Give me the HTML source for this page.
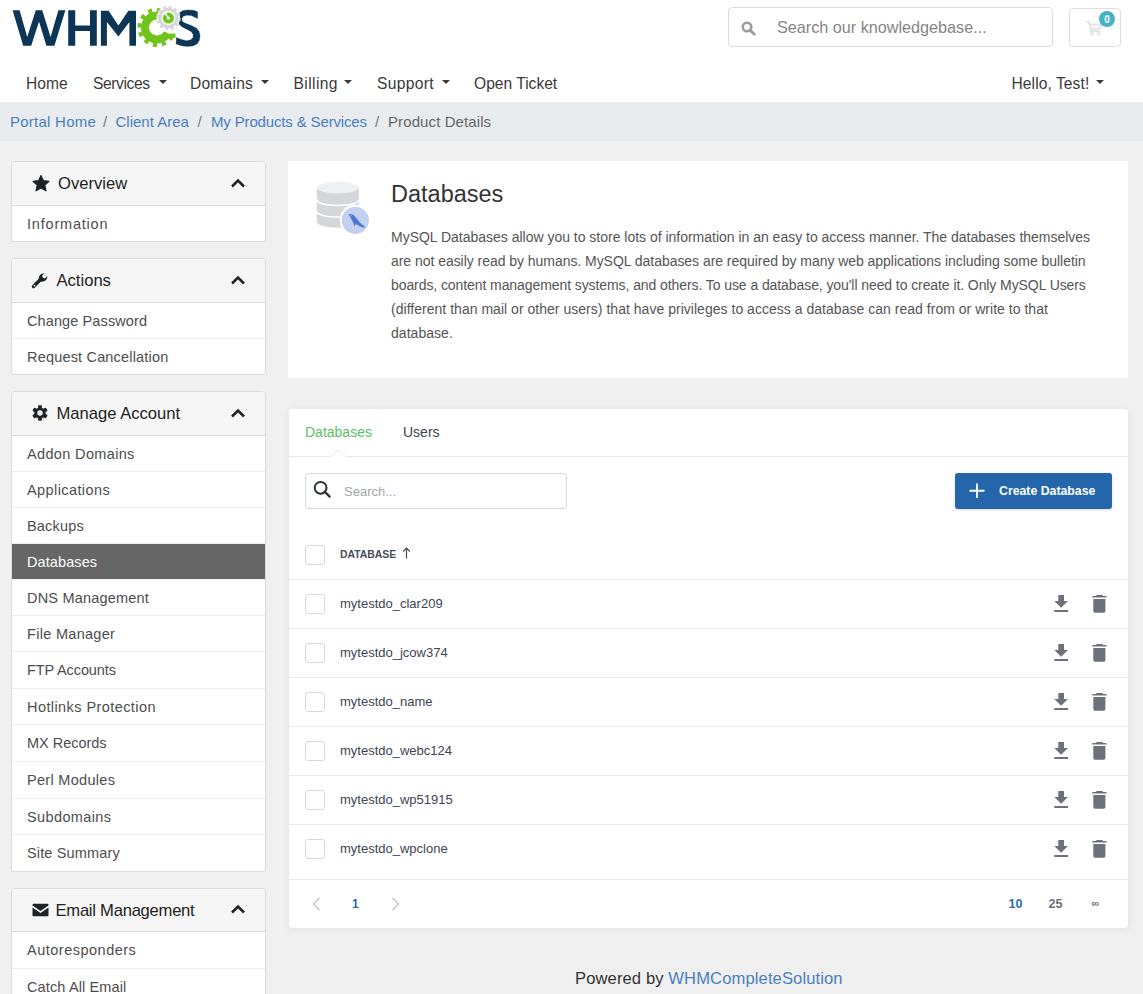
<!DOCTYPE html>
<html><head><meta charset="utf-8">
<style>
*{box-sizing:border-box;margin:0;padding:0}
html,body{width:1143px;height:994px;overflow:hidden}
body{background:#f0f0f0;font-family:"Liberation Sans",sans-serif;color:#333;position:relative}
.abs{position:absolute}
#hdr{position:absolute;left:0;top:0;width:1143px;height:102px;background:#fff}
#crumb{position:absolute;left:0;top:102px;width:1143px;height:39px;background:#e9ecef}
.nav{position:absolute;top:75px;font-size:15.6px;color:#3a3a3a;white-space:nowrap;line-height:18px}
.caret{position:absolute;top:80px;width:0;height:0;border-left:4.5px solid transparent;border-right:4.5px solid transparent;border-top:4.6px solid #3a3a3a}
.bc{position:absolute;top:112px;font-size:15px;line-height:18px;color:#4a7fbf;white-space:nowrap}
.bcs{position:absolute;top:112px;font-size:15px;line-height:18px;color:#777}
.panel{position:absolute;left:11px;width:255px;background:#fff;border:1px solid #dcdcdc;border-radius:4px 4px 2px 2px;overflow:hidden}
.ph{height:44px;background:#f6f6f6;border-bottom:1px solid #dcdcdc;position:relative}
.ph .t{position:absolute;left:46px;top:12px;font-size:16.6px;line-height:20px;color:#222;white-space:nowrap}
.ph .ic{position:absolute;left:20px;top:13px}
.ph .chev{position:absolute;left:218px;top:16px}
.it{height:36px;border-top:1px solid #efefef;position:relative;font-size:14.5px;letter-spacing:0.3px;color:#4d4d4d}
.ph + .it{border-top:0;height:35px}
.it.t2{height:36.67px}
.it span{position:absolute;left:15px;top:10px;line-height:16px;white-space:nowrap}
.it.act{background:#666;color:#fff}
.card{position:absolute;left:288px;width:840px;background:#fff}
.row{position:absolute;left:0;width:840px;height:49px;border-top:1px solid #e8e9ee}
.cb{position:absolute;left:17px;width:20px;height:20px;border:1px solid #d5d8e0;border-radius:3px;background:#fff}
.dbn{position:absolute;left:52px;font-size:13px;color:#3e4452;line-height:16px;white-space:nowrap}
</style></head><body>

<div id="hdr">
<svg class="abs" style="left:0;top:0" width="210" height="56" viewBox="0 0 210 56">
 <g fill="#0d3556">
  <polygon points="12.6,10.3 19.6,10.3 27.2,37 35.8,10.3 42.2,10.3 50.6,37 58.4,10.3 65.4,10.3 54.4,45.8 46.4,45.8 39,21.5 31.2,45.8 23.2,45.8"/>
  <polygon points="68.2,10.3 75.2,10.3 75.2,25.4 90,25.4 90,10.3 96.8,10.3 96.8,45.8 90,45.8 90,31.1 75.2,31.1 75.2,45.8 68.2,45.8"/>
  <polygon points="100.9,45.8 100.9,10.8 108.6,10.8 118.4,25.5 128.4,10.8 136,10.8 136,45.8 129.4,45.8 129.4,22 118.4,36.5 106.9,22 106.9,45.8"/>
  <path d="M197.6,11.8 L193.5,10.3 L188.1,9.9 L183.1,10.4 L179.7,12.5 L178.1,15.9 L178.1,19.9 L179,24 L181.8,26.7 L187.2,29.4 L191.3,31.7 L193.1,34.4 L193.1,37.6 L190.8,39.8 L186.7,40.7 L181.3,39.4 L176.3,37.6 L176.1,43.9 L181.3,45.7 L187.2,46.4 L192.6,46 L197.1,43.9 L199.4,40.3 L200.1,35.8 L199,31.2 L196.2,28.1 L191.3,25.6 L184.9,23.1 L182.2,21.3 L181.8,18.6 L183.1,16.3 L186.7,15.2 L191.3,15.6 L197.6,18.6 Z" fill="#0d3556" stroke="#0d3556" stroke-width="0.3" stroke-linejoin="round"/>
 </g>
 <g>
  <path d="M167.60,33.13 A12,12 0 1 1 160.11,15.91" fill="none" stroke="#70c41c" stroke-width="8"/>
  <rect x="165" y="33.6" width="10.5" height="4.2" fill="#70c41c"/>
  <clipPath id="gclip"><path d="M157,27.5 L180,36 L180,60 L120,60 L120,0 L162,0 Z"/></clipPath>
  <circle cx="157" cy="27.5" r="17.6" fill="none" stroke="#70c41c" stroke-width="4" stroke-dasharray="4.2 4.97" stroke-dashoffset="0" clip-path="url(#gclip)"/>
  <circle cx="168.4" cy="18" r="11.6" fill="#fff"/>
  <circle cx="168.4" cy="18" r="8.6" fill="none" stroke="#d8d8d8" stroke-width="3.4"/>
  <circle cx="168.4" cy="18" r="11" fill="none" stroke="#d8d8d8" stroke-width="2.6" stroke-dasharray="2.9 2.86"/>
  <circle cx="168.4" cy="18" r="5.6" fill="#70c41c"/>
  <path d="M168.4,18 L163,13 L166,11.8 Z" fill="#fff"/>
  <circle cx="168.4" cy="18" r="1.6" fill="#fff"/>
 </g>
</svg>
<div class="abs" style="left:728px;top:7px;width:325px;height:40px;border:1px solid #dcdcdc;border-radius:4px;background:#fff">
 <svg class="abs" style="left:12px;top:13px" width="15" height="15" viewBox="0 0 15 15"><circle cx="6" cy="6" r="4.3" fill="none" stroke="#9c9c9c" stroke-width="2.6"/><line x1="9.2" y1="9.2" x2="13.3" y2="13.3" stroke="#9c9c9c" stroke-width="2.8" stroke-linecap="round"/></svg>
 <div class="abs" style="left:48px;top:9px;font-size:16.2px;line-height:20px;color:#858585;white-space:nowrap">Search our knowledgebase...</div>
</div>
<div class="abs" style="left:1069px;top:8px;width:52px;height:39px;border:1px solid #dedede;border-radius:4px;background:#fff">
 <svg class="abs" style="left:16px;top:12px" width="17" height="15" viewBox="0 0 17 15"><path d="M0.5,1 L3,1 L5,10 L13.5,10 M3.6,3.5 L15.5,3.5 L14.2,7.6 L4.5,7.6" fill="none" stroke="#e2e2e2" stroke-width="1.8"/><circle cx="6" cy="12.6" r="1.3" fill="none" stroke="#e2e2e2" stroke-width="1.2"/><circle cx="12.6" cy="12.6" r="1.3" fill="none" stroke="#e2e2e2" stroke-width="1.2"/></svg>
 <div class="abs" style="left:29px;top:2px;width:16px;height:16px;border-radius:50%;background:#46b2c5;color:#fff;font-size:10px;font-weight:bold;line-height:17px;text-align:center">0</div>
</div>
<div class="nav" style="left:26px">Home</div>
<div class="nav" style="left:93px;letter-spacing:-0.4px">Services</div>
<div class="nav" style="left:190px;letter-spacing:0.22px">Domains</div>
<div class="nav" style="left:293.5px;letter-spacing:0.4px">Billing</div>
<div class="nav" style="left:377px;letter-spacing:0.33px">Support</div>
<div class="nav" style="left:474px">Open Ticket</div>
<div class="nav" style="left:1011.5px;letter-spacing:0.08px">Hello, Test!</div>
<span class="caret" style="left:158.5px"></span><span class="caret" style="left:261px"></span><span class="caret" style="left:344px"></span><span class="caret" style="left:441.5px"></span><span class="caret" style="left:1096px"></span>
</div>
<div id="crumb">
<div class="bc" style="left:10px;top:11px;letter-spacing:0.25px">Portal Home</div>
<div class="bcs" style="left:103px;top:11px">/</div>
<div class="bc" style="left:115.5px;top:11px">Client Area</div>
<div class="bcs" style="left:197.5px;top:11px">/</div>
<div class="bc" style="left:211px;top:11px;letter-spacing:-0.15px">My Products &amp; Services</div>
<div class="bcs" style="left:375px;top:11px">/</div>
<div class="bcs" style="left:388px;top:11px;color:#666;letter-spacing:0.1px">Product Details</div>
</div>

<div class="panel" style="top:161px">
 <div class="ph"><svg class="ic" width="18" height="17" viewBox="0 0 18 17" style="left:20px;top:13px"><path d="M9,0.6 L11.4,5.7 L17,6.3 L12.8,10.1 L14,15.8 L9,12.9 L4,15.8 L5.2,10.1 L1,6.3 L6.6,5.7 Z" fill="#1f2328" stroke="#1f2328" stroke-width="1.2" stroke-linejoin="round"/></svg><div class="t">Overview</div><svg class="chev" width="16" height="10" viewBox="0 0 16 10"><path d="M2,8.5 L8,2.5 L14,8.5" fill="none" stroke="#1f2328" stroke-width="2.6"/></svg></div>
 <div class="it"><span style="letter-spacing:0.80px">Information</span></div>
</div>
<div class="panel" style="top:258px">
 <div class="ph"><svg class="ic" width="18" height="18" viewBox="0 0 18 18" style="left:19px;top:11.5px"><path d="M2.5,15.5 L9.5,8.5" stroke="#1f2328" stroke-width="3.4" stroke-linecap="round"/><path d="M8.2,9.8 C6.8,6.5 8.8,2.2 13.5,2.3 L11.2,4.6 L11.8,6.8 L14,7.4 L16.3,5.1 C16.6,9.6 12.5,11.6 9,10.4 Z" fill="#1f2328"/><circle cx="3.4" cy="14.6" r="0.9" fill="#f6f6f6"/></svg><div class="t" style="left:44.5px">Actions</div><svg class="chev" width="16" height="10" viewBox="0 0 16 10"><path d="M2,8.5 L8,2.5 L14,8.5" fill="none" stroke="#1f2328" stroke-width="2.6"/></svg></div>
 <div class="it"><span style="letter-spacing:0.11px">Change Password</span></div>
 <div class="it"><span style="letter-spacing:0.18px">Request Cancellation</span></div>
</div>
<div class="panel" style="top:391px">
 <div class="ph"><svg class="ic" width="16" height="16" viewBox="0 0 16 16" style="left:19.5px;top:13px"><g transform="translate(8 8)" fill="#1f2328"><circle r="5.6"/><rect x="-1.9" y="-7.8" width="3.8" height="15.6" rx="0.8"/><rect x="-1.9" y="-7.8" width="3.8" height="15.6" rx="0.8" transform="rotate(60)"/><rect x="-1.9" y="-7.8" width="3.8" height="15.6" rx="0.8" transform="rotate(120)"/><circle r="2.7" fill="#f6f6f6"/></g></svg><div class="t" style="left:44.5px">Manage Account</div><svg class="chev" width="16" height="10" viewBox="0 0 16 10"><path d="M2,8.5 L8,2.5 L14,8.5" fill="none" stroke="#1f2328" stroke-width="2.6"/></svg></div>
 <div class="it"><span style="letter-spacing:0.35px">Addon Domains</span></div>
 <div class="it"><span style="letter-spacing:0.41px">Applications</span></div>
 <div class="it"><span style="letter-spacing:0.18px">Backups</span></div>
 <div class="it act"><span style="letter-spacing:0.10px">Databases</span></div>
 <div class="it"><span style="letter-spacing:0.19px">DNS Management</span></div>
 <div class="it"><span>File Manager</span></div>
 <div class="it t2"><span style="letter-spacing:-0.09px">FTP Accounts</span></div>
 <div class="it t2"><span style="letter-spacing:0.42px">Hotlinks Protection</span></div>
 <div class="it t2"><span style="letter-spacing:-0.03px">MX Records</span></div>
 <div class="it t2"><span style="letter-spacing:0.30px">Perl Modules</span></div>
 <div class="it t2"><span style="letter-spacing:0.38px">Subdomains</span></div>
 <div class="it t2"><span style="letter-spacing:0.15px">Site Summary</span></div>
</div>
<div class="panel" style="top:888px;height:200px">
 <div class="ph" style="height:43px"><svg class="ic" width="17" height="14" viewBox="0 0 17 14" style="left:20px;top:14px"><path d="M0.5,1.8 Q0.5,0.8 1.5,0.8 L15.5,0.8 Q16.5,0.8 16.5,1.8 L16.5,2.6 L8.5,8 L0.5,2.6 Z" fill="#1f2328"/><path d="M0.5,4.6 L8.5,10 L16.5,4.6 L16.5,12.2 Q16.5,13.2 15.5,13.2 L1.5,13.2 Q0.5,13.2 0.5,12.2 Z" fill="#1f2328"/></svg><div class="t" style="left:43.5px;top:12px;letter-spacing:-0.25px">Email Management</div><svg class="chev" style="top:15px" width="16" height="10" viewBox="0 0 16 10"><path d="M2,8.5 L8,2.5 L14,8.5" fill="none" stroke="#1f2328" stroke-width="2.6"/></svg></div>
 <div class="it" style="height:36px"><span style="top:9.5px;letter-spacing:0.50px">Autoresponders</span></div>
 <div class="it"><span style="letter-spacing:0.13px">Catch All Email</span></div>
</div>

<div class="card" style="top:161px;height:217px">
 <svg class="abs" style="left:26px;top:18px" width="60" height="58" viewBox="0 0 60 58">
  <path d="M2.8,8.6 L2.8,42.6 C2.8,46.4 12,48.8 24,48.8 C36,48.8 45,46.4 45,42.6 L45,8.6 Z" fill="#d5d6da"/>
  <ellipse cx="23.9" cy="8.6" rx="21.1" ry="5.8" fill="#eff0f3"/>
  <path d="M2.8,20.2 C2.8,24.2 12,26.4 24,26.4 C36,26.4 45,24.2 45,20.2" fill="none" stroke="#fff" stroke-width="1.5"/>
  <path d="M2.8,31.8 C2.8,35.8 12,38 24,38 C36,38 45,35.8 45,31.8" fill="none" stroke="#fff" stroke-width="1.5"/>
  <circle cx="41.3" cy="41.3" r="15.6" fill="#fff"/>
  <circle cx="41.3" cy="41.3" r="13.6" fill="#c2d1f0"/>
  <path d="M34.6,35.2 C36.8,34.6 39.2,35.4 41,37.4 C43.2,39.8 45.2,43 47.6,45.2 L50.8,47.2 L50,48.8 L46.4,47.6 C44.6,46.8 43.2,46 41.8,45 L40.4,47.4 L39.6,44.4 C38.4,42 37,39.6 35.8,37.2 Z" fill="#4b77d1"/>
  <circle cx="37.6" cy="36.8" r="0.5" fill="#c2d1f0"/>
 </svg>
 <div class="abs" style="left:103px;top:19px;font-size:23.5px;line-height:28px;color:#333">Databases</div>
 <div class="abs" style="left:103px;top:64px;width:740px;font-size:14px;line-height:24px;color:#555;white-space:nowrap"><span style="letter-spacing:-0.012px">MySQL Databases allow you to store lots of information in an easy to access manner. The databases themselves</span><br><span style="letter-spacing:-0.042px">are not easily read by humans. MySQL databases are required by many web applications including some bulletin</span><br><span style="letter-spacing:-0.083px">boards, content management systems, and others. To use a database, you'll need to create it. Only MySQL Users</span><br><span style="letter-spacing:0.025px">(different than mail or other users) that have privileges to access a database can read from or write to that</span><br><span style="letter-spacing:0.038px">database.</span></div>
</div>
<div class="card" style="left:289px;width:839px;top:409px;height:519px;border-radius:4px;box-shadow:0 1px 9px rgba(0,0,0,0.07);overflow:hidden"><div class="abs" style="left:-1px;top:0;width:840px;height:519px">
 <div class="abs" style="left:17px;top:14px;font-size:14px;line-height:18px;color:#5cbf63">Databases</div>
 <div class="abs" style="left:115px;top:14px;font-size:14px;line-height:18px;color:#3e4452">Users</div>
 <div class="abs" style="left:0;top:47px;width:840px;height:1px;background:#e6e8ef"></div>
 <svg class="abs" style="left:42px;top:40px" width="16" height="9" viewBox="0 0 16 9"><path d="M0,8 L8,1 L16,8" fill="#fff" stroke="#e6e8ef" stroke-width="1"/><rect x="0" y="8" width="16" height="1" fill="#fff"/></svg>
 <div class="abs" style="left:17px;top:64px;width:262px;height:36px;border:1px solid #d7dbe6;border-radius:3px;background:#fff">
  <svg class="abs" style="left:7px;top:6px" width="19" height="19" viewBox="0 0 19 19"><circle cx="7.6" cy="7.8" r="5.9" fill="none" stroke="#2a2f38" stroke-width="2"/><line x1="11.6" y1="11.6" x2="16.6" y2="16.6" stroke="#2a2f38" stroke-width="2.2" stroke-linecap="round"/></svg>
  <div class="abs" style="left:38px;top:10px;font-size:13px;line-height:16px;color:#a3a6ad">Search...</div>
 </div>
 <div class="abs" style="left:667px;top:64px;width:157px;height:36px;border-radius:3px;background:#2566aa;box-shadow:0 1px 3px rgba(0,0,0,0.15)">
  <svg class="abs" style="left:14px;top:10px" width="16" height="16" viewBox="0 0 16 16"><path d="M8,0.5 V15 M0.5,7.75 H15.5" stroke="#fff" stroke-width="1.8"/></svg>
  <div class="abs" style="left:44px;top:10px;font-size:12.3px;line-height:16px;color:#fff;font-weight:bold;white-space:nowrap">Create Database</div>
 </div>
 <div class="cb" style="top:136px"></div>
 <div class="abs" style="left:52px;top:139px;font-size:10.4px;line-height:14px;font-weight:bold;color:#474d59">DATABASE</div>
 <svg class="abs" style="left:114px;top:138px" width="9" height="12" viewBox="0 0 9 12"><path d="M4.5,1.2 V11.5 M1.2,4.5 L4.5,1.2 L7.8,4.5" fill="none" stroke="#474d59" stroke-width="1.2"/></svg>
 <div class="row" style="top:170px;height:49px"><div class="cb" style="top:14px"></div><div class="dbn" style="top:16px">mytestdo_clar209</div><svg class="abs" style="left:766px;top:15px" width="15" height="18" viewBox="0 0 15 18"><path d="M4.3,0 H10 V6 H14 L7.15,12.8 L0.3,6 H4.3 Z" fill="#6c717b"/><rect x="0.3" y="15" width="13.8" height="2" fill="#6c717b"/></svg><svg class="abs" style="left:804px;top:15px" width="15" height="18" viewBox="0 0 15 18"><path d="M4.5,0 H10.5 L11,1 H14.5 V2.6 H0.3 V1 H4 Z" fill="#6c717b"/><path d="M1.3,4 H13.4 V16 Q13.4,17.7 11.7,17.7 H3 Q1.3,17.7 1.3,16 Z" fill="#6c717b"/></svg></div>
 <div class="row" style="top:219px;height:49px"><div class="cb" style="top:14px"></div><div class="dbn" style="top:16px">mytestdo_jcow374</div><svg class="abs" style="left:766px;top:15px" width="15" height="18" viewBox="0 0 15 18"><path d="M4.3,0 H10 V6 H14 L7.15,12.8 L0.3,6 H4.3 Z" fill="#6c717b"/><rect x="0.3" y="15" width="13.8" height="2" fill="#6c717b"/></svg><svg class="abs" style="left:804px;top:15px" width="15" height="18" viewBox="0 0 15 18"><path d="M4.5,0 H10.5 L11,1 H14.5 V2.6 H0.3 V1 H4 Z" fill="#6c717b"/><path d="M1.3,4 H13.4 V16 Q13.4,17.7 11.7,17.7 H3 Q1.3,17.7 1.3,16 Z" fill="#6c717b"/></svg></div>
 <div class="row" style="top:268px;height:49px"><div class="cb" style="top:14px"></div><div class="dbn" style="top:16px">mytestdo_name</div><svg class="abs" style="left:766px;top:15px" width="15" height="18" viewBox="0 0 15 18"><path d="M4.3,0 H10 V6 H14 L7.15,12.8 L0.3,6 H4.3 Z" fill="#6c717b"/><rect x="0.3" y="15" width="13.8" height="2" fill="#6c717b"/></svg><svg class="abs" style="left:804px;top:15px" width="15" height="18" viewBox="0 0 15 18"><path d="M4.5,0 H10.5 L11,1 H14.5 V2.6 H0.3 V1 H4 Z" fill="#6c717b"/><path d="M1.3,4 H13.4 V16 Q13.4,17.7 11.7,17.7 H3 Q1.3,17.7 1.3,16 Z" fill="#6c717b"/></svg></div>
 <div class="row" style="top:317px;height:49px"><div class="cb" style="top:14px"></div><div class="dbn" style="top:16px">mytestdo_webc124</div><svg class="abs" style="left:766px;top:15px" width="15" height="18" viewBox="0 0 15 18"><path d="M4.3,0 H10 V6 H14 L7.15,12.8 L0.3,6 H4.3 Z" fill="#6c717b"/><rect x="0.3" y="15" width="13.8" height="2" fill="#6c717b"/></svg><svg class="abs" style="left:804px;top:15px" width="15" height="18" viewBox="0 0 15 18"><path d="M4.5,0 H10.5 L11,1 H14.5 V2.6 H0.3 V1 H4 Z" fill="#6c717b"/><path d="M1.3,4 H13.4 V16 Q13.4,17.7 11.7,17.7 H3 Q1.3,17.7 1.3,16 Z" fill="#6c717b"/></svg></div>
 <div class="row" style="top:366px;height:49px"><div class="cb" style="top:14px"></div><div class="dbn" style="top:16px">mytestdo_wp51915</div><svg class="abs" style="left:766px;top:15px" width="15" height="18" viewBox="0 0 15 18"><path d="M4.3,0 H10 V6 H14 L7.15,12.8 L0.3,6 H4.3 Z" fill="#6c717b"/><rect x="0.3" y="15" width="13.8" height="2" fill="#6c717b"/></svg><svg class="abs" style="left:804px;top:15px" width="15" height="18" viewBox="0 0 15 18"><path d="M4.5,0 H10.5 L11,1 H14.5 V2.6 H0.3 V1 H4 Z" fill="#6c717b"/><path d="M1.3,4 H13.4 V16 Q13.4,17.7 11.7,17.7 H3 Q1.3,17.7 1.3,16 Z" fill="#6c717b"/></svg></div>
 <div class="row" style="top:415px;height:55px"><div class="cb" style="top:14px"></div><div class="dbn" style="top:16px">mytestdo_wpclone</div><svg class="abs" style="left:766px;top:15px" width="15" height="18" viewBox="0 0 15 18"><path d="M4.3,0 H10 V6 H14 L7.15,12.8 L0.3,6 H4.3 Z" fill="#6c717b"/><rect x="0.3" y="15" width="13.8" height="2" fill="#6c717b"/></svg><svg class="abs" style="left:804px;top:15px" width="15" height="18" viewBox="0 0 15 18"><path d="M4.5,0 H10.5 L11,1 H14.5 V2.6 H0.3 V1 H4 Z" fill="#6c717b"/><path d="M1.3,4 H13.4 V16 Q13.4,17.7 11.7,17.7 H3 Q1.3,17.7 1.3,16 Z" fill="#6c717b"/></svg></div>
 <div class="row" style="top:470px;height:49px">
  <svg class="abs" style="left:24px;top:17px" width="9" height="14" viewBox="0 0 9 14"><path d="M7.5,1 L1.5,7 L7.5,13" fill="none" stroke="#c5c8ce" stroke-width="1.6"/></svg>
  <div class="abs" style="left:64px;top:17px;font-size:12px;line-height:14px;font-weight:bold;color:#2c6cb0">1</div>
  <svg class="abs" style="left:103px;top:17px" width="9" height="14" viewBox="0 0 9 14"><path d="M1.5,1 L7.5,7 L1.5,13" fill="none" stroke="#c5c8ce" stroke-width="1.6"/></svg>
  <div class="abs" style="left:720.5px;top:17px;font-size:12.5px;line-height:14px;font-weight:bold;color:#2c6cb0">10</div>
  <div class="abs" style="left:760.5px;top:17px;font-size:12.5px;line-height:14px;font-weight:bold;color:#6a6f78">25</div>
  <div class="abs" style="left:803.5px;top:16px;font-size:11px;line-height:14px;font-weight:bold;color:#6a6f78">&#8734;</div>
 </div>
</div></div>
<div class="abs" style="left:575px;top:969px;font-size:16.6px;letter-spacing:0.1px;line-height:20px;color:#333;white-space:nowrap">Powered by <span style="color:#4a7fbf">WHMCompleteSolution</span></div>
</body></html>
